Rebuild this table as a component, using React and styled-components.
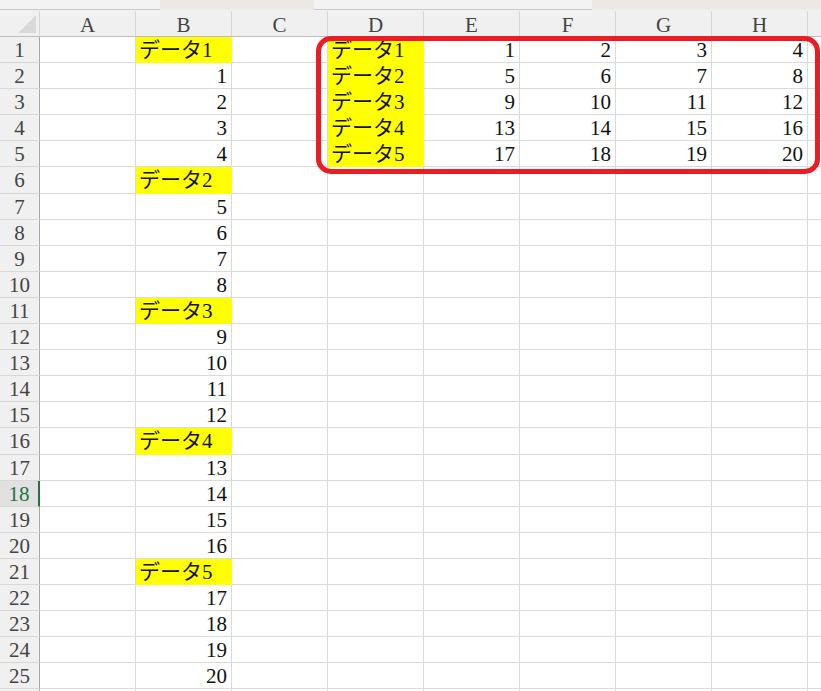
import React from "react";
import styled, { createGlobalStyle } from "styled-components";

const GlobalStyle = createGlobalStyle`
  html, body { margin: 0; padding: 0; background: #ffffff; }
  body { width: 821px; height: 691px; overflow: hidden; }
`;

const Page = styled.div`
  position: relative;
  width: 821px;
  height: 691px;
  overflow: hidden;
  background: #ffffff;
  font-family: "Liberation Serif", "Noto Sans CJK JP", serif;
`;

const TopStrip = styled.div`
  display: flex;
  height: 11px;
  box-sizing: border-box;
  background: #ece8e3;
  border-bottom: 1px solid #f4f2ef;
`;

const StripBox = styled.div`
  width: ${(p) => p.$w}px;
  margin-left: ${(p) => p.$gap}px;
  box-sizing: border-box;
  background: #f3f3f3;
  border-bottom: 1px solid #c8c8c8;
`;

const Sheet = styled.div`
  display: grid;
  grid-template-columns: 40px repeat(9, 96px);
  grid-template-rows: 26px repeat(26, 26.1px);
`;

const Corner = styled.div`
  box-sizing: border-box;
  background: #f0f0f0;
  border-right: 1px solid #d6d6d6;
  border-bottom: 1px solid #bdbdbd;
  display: flex;
  align-items: flex-end;
  justify-content: flex-end;
  padding: 0 3px 3px 0;
`;

const ColHead = styled.div`
  box-sizing: border-box;
  background: #f0f0f0;
  border-right: 1px solid #d6d6d6;
  border-bottom: 1px solid #bdbdbd;
  color: #444444;
  font-size: 21px;
  line-height: 28px;
  text-align: center;
`;

const RowHead = styled.div`
  box-sizing: border-box;
  background: ${(p) => (p.$active ? "#e1e1e1" : "#f0f0f0")};
  color: ${(p) => (p.$active ? "#217346" : "#444444")};
  border-right: ${(p) => (p.$active ? "2px solid #217346" : "1px solid #a8a8a8")};
  border-bottom: 1px solid #d8d8d8;
  font-size: 21px;
  line-height: 26px;
  text-align: center;
`;

const Cell = styled.div`
  box-sizing: border-box;
  background: ${(p) => p.$fill || "#ffffff"};
  border-right: 1px solid ${(p) => p.$fill || "#dadada"};
  border-bottom: 1px solid ${(p) => p.$fill || "#dadada"};
  color: #111111;
  font-size: 21px;
  line-height: 26px;
  padding: 0 4px 0 3px;
  text-align: ${(p) => (p.$num ? "right" : "left")};
  white-space: nowrap;
  overflow: hidden;
`;

const Highlight = styled.div`
  position: absolute;
  left: 316px;
  top: 36px;
  width: 504px;
  height: 138px;
  box-sizing: border-box;
  border: 5px solid #ed1c24;
  border-radius: 15px;
  pointer-events: none;
`;

const COLS = ["A", "B", "C", "D", "E", "F", "G", "H", ""];
const YELLOW = "#ffff00";

function cellValue(row, col) {
  if (row > 25) return null;
  if (col === "B") {
    const g = Math.floor((row - 1) / 5);
    const k = (row - 1) % 5;
    if (k === 0) return { text: `データ${g + 1}`, fill: YELLOW };
    return { text: String(g * 4 + k), num: true };
  }
  if (row <= 5) {
    if (col === "D") return { text: `データ${row}`, fill: YELLOW };
    const idx = ["E", "F", "G", "H"].indexOf(col);
    if (idx >= 0) return { text: String((row - 1) * 4 + idx + 1), num: true };
  }
  return null;
}

function CornerTriangle() {
  return (
    <svg width="18" height="18" viewBox="0 0 18 18">
      <polygon points="18,0 18,18 0,18" fill="#d9d9d9" />
    </svg>
  );
}

export default function App() {
  const rows = Array.from({ length: 26 }, (_, i) => i + 1);
  return (
    <Page>
      <GlobalStyle />
      <TopStrip>
        <StripBox $w={160} $gap={0} />
        <StripBox $w={278} $gap={154} />
      </TopStrip>
      <Sheet>
        <Corner>
          <CornerTriangle />
        </Corner>
        {COLS.map((c, i) => (
          <ColHead key={i}>{c}</ColHead>
        ))}
        {rows.map((r) => (
          <React.Fragment key={r}>
            <RowHead $active={r === 18}>{r <= 25 ? r : ""}</RowHead>
            {COLS.map((c, i) => {
              const v = cellValue(r, c);
              return (
                <Cell key={i} $fill={v && v.fill} $num={v && v.num}>
                  {v ? v.text : ""}
                </Cell>
              );
            })}
          </React.Fragment>
        ))}
      </Sheet>
      <Highlight />
    </Page>
  );
}
